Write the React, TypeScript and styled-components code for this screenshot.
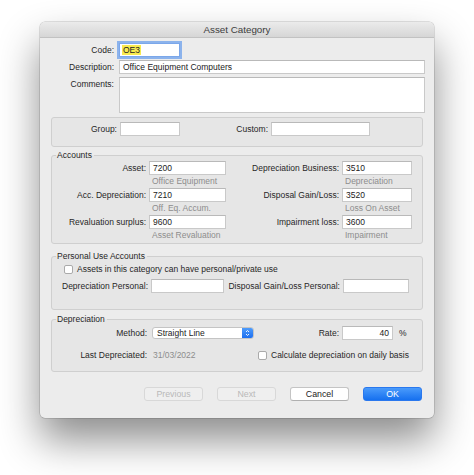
import React from 'react'
import styled, { createGlobalStyle } from 'styled-components'

const GlobalStyle = createGlobalStyle`
  body {
    margin: 0;
    background: #ffffff;
    font-family: "Liberation Sans", Arial, sans-serif;
    color: #262626;
  }
`

const Page = styled.div`
  height: 475px;
  padding: 22px 0 0 40px;
  box-sizing: border-box;
  overflow: hidden;
`

const Window = styled.div`
  width: 394px;
  height: 396px;
  border-radius: 5px;
  background: #ececec;
  box-shadow: 0 22px 40px rgba(0, 0, 0, 0.45), 0 0 0 0.5px rgba(0, 0, 0, 0.22);
  overflow: hidden;
  display: flex;
  flex-direction: column;
`

const TitleBar = styled.div`
  height: 15px;
  border-bottom: 1px solid #c2c2c2;
  background: linear-gradient(#ebebeb, #d6d6d6);
  display: flex;
  align-items: center;
  justify-content: center;
  font-size: 9.8px;
  color: #3c3c3c;
`

const Body = styled.div`
  padding: 5px 9px 0 11px;
  display: flex;
  flex-direction: column;
  font-size: 8.5px;
`

const TopForm = styled.div`
  display: grid;
  grid-template-columns: 63px 1fr;
  column-gap: 5px;
  row-gap: 3px;
`

const Label = styled.div<{ $w?: number; $align?: string }>`
  ${p => (p.$w ? `width: ${p.$w}px; flex: none;` : '')}
  text-align: ${p => p.$align || 'right'};
  line-height: 14px;
  white-space: nowrap;
  color: #262626;
`

const Input = styled.div<{ $w?: number; $h?: number; $right?: boolean; $focus?: boolean }>`
  ${p => (p.$w ? `width: ${p.$w}px; flex: none;` : '')}
  height: ${p => p.$h || 14}px;
  box-sizing: border-box;
  background: #ffffff;
  border: 1px solid ${p => (p.$focus ? '#7ba7ea' : '#c9c9c9')};
  border-top-color: ${p => (p.$focus ? '#7ba7ea' : '#b9b9b9')};
  box-shadow: ${p => (p.$focus ? '0 0 0 2px rgba(108, 160, 236, 0.75)' : 'none')};
  padding: 0 3px;
  line-height: 12px;
  text-align: ${p => (p.$right ? 'right' : 'left')};
  color: #222;
  white-space: nowrap;
  overflow: hidden;
`

const Highlight = styled.span`
  background: #f8ea4f;
  padding: 0 1px;
  margin-left: -1px;
`

const Box = styled.div`
  margin: 4px 2px 0 0;
  height: 30px;
  box-sizing: border-box;
  border: 1px solid #cfcfcf;
  border-radius: 3px;
  background: rgba(0, 0, 0, 0.022);
  padding-top: 4px;
`

const Group = styled.fieldset<{ $mt: number; $pb: number }>`
  margin: ${p => p.$mt}px 2px 0 0;
  padding: 0 0 ${p => p.$pb}px 0;
  border: 1px solid #cfcfcf;
  border-radius: 3px;
  background: rgba(0, 0, 0, 0.022);
  min-width: 0;
`

const Legend = styled.legend`
  margin-left: 4px;
  padding: 0 2px 0 1px;
  font-size: 8.5px;
  line-height: 12px;
  color: #262626;
`

const Row = styled.div<{ $gap?: number; $pl?: number; $mt?: number; $h?: number }>`
  display: flex;
  align-items: center;
  gap: ${p => p.$gap ?? 3}px;
  padding-left: ${p => p.$pl ?? 0}px;
  margin-top: ${p => p.$mt ?? 0}px;
  ${p => (p.$h ? `height: ${p.$h}px;` : '')}
`

const AccountGrid = styled.div`
  display: grid;
  grid-template-columns: 94px 77px 110px 70px;
  grid-auto-rows: 27px;
  column-gap: 3px;
`

const AccountCell = styled.div`
  display: flex;
  flex-direction: column;
`

const SubLabel = styled.div`
  line-height: 13px;
  padding-left: 3px;
  color: #8d8d8d;
  white-space: nowrap;
`

const DateValue = styled.div`
  width: 111px;
  flex: none;
  box-sizing: border-box;
  padding-left: 6px;
  line-height: 14px;
  color: #8d8d8d;
`

const Check = styled.span`
  width: 9px;
  height: 9px;
  flex: none;
  box-sizing: border-box;
  border: 1px solid #aaaaaa;
  border-radius: 2px;
  background: #ffffff;
`

const Spacer = styled.span<{ $w: number }>`
  width: ${p => p.$w}px;
  flex: none;
`

const Select = styled.div`
  width: 102px;
  height: 12px;
  flex: none;
  box-sizing: border-box;
  display: flex;
  border: 1px solid #c4c4c4;
  border-radius: 3px;
  background: #ffffff;
  overflow: hidden;
  line-height: 10px;
`

const SelectText = styled.span`
  flex: 1;
  padding-left: 4px;
  color: #222;
`

const Stepper = styled.span`
  width: 11px;
  background: linear-gradient(#4e9cfb, #1c6ff0);
  display: flex;
  align-items: center;
  justify-content: center;
`

const Buttons = styled.div`
  display: flex;
  justify-content: flex-end;
  gap: 14px;
  margin: 15px 3px 0 0;
`

const Button = styled.div<{ $kind: 'disabled' | 'normal' | 'primary' }>`
  width: 59px;
  height: 14px;
  box-sizing: border-box;
  border-radius: 3px;
  display: flex;
  align-items: center;
  justify-content: center;
  font-size: 8.8px;
  ${p =>
    p.$kind === 'primary'
      ? `background: linear-gradient(#4a9bfb, #1670ef); color: #fff; border: 1px solid #2a78ee;`
      : p.$kind === 'normal'
      ? `background: #ffffff; color: #222; border: 1px solid #c4c4c4; border-bottom-color: #b0b0b0;`
      : `background: #efefef; color: #b9b9b9; border: 1px solid #d8d8d8;`}
`

const StepperIcon = () => (
  <svg width="5" height="8" viewBox="0 0 5 8">
    <path d="M1 3 L2.5 1.5 L4 3 M1 5 L2.5 6.5 L4 5" stroke="#fff" strokeWidth="0.9" fill="none" />
  </svg>
)

const accounts = [
  { label: 'Asset:', code: '7200', name: 'Office Equipment', rLabel: 'Depreciation Business:', rCode: '3510', rName: 'Depreciation' },
  { label: 'Acc. Depreciation:', code: '7210', name: 'Off. Eq. Accum.', rLabel: 'Disposal Gain/Loss:', rCode: '3520', rName: 'Loss On Asset' },
  { label: 'Revaluation surplus:', code: '9600', name: 'Asset Revaluation', rLabel: 'Impairment loss:', rCode: '3600', rName: 'Impairment' },
]

export default function App() {
  return (
    <Page>
      <GlobalStyle />
      <Window>
        <TitleBar>Asset Category</TitleBar>
        <Body>
          <TopForm>
            <Label>Code:</Label>
            <Input $w={61} $focus>
              <Highlight>OE3</Highlight>
            </Input>
            <Label>Description:</Label>
            <Input>Office Equipment Computers</Input>
            <Label>Comments:</Label>
            <Input $h={36} />
          </TopForm>

          <Box>
            <Row>
              <Label $w={65}>Group:</Label>
              <Input $w={60} />
              <Label $w={85}>Custom:</Label>
              <Input $w={99} />
            </Row>
          </Box>

          <Group $mt={2} $pb={1}>
            <Legend>Accounts</Legend>
            <AccountGrid>
              {accounts.map(a => (
                <React.Fragment key={a.code}>
                  <Label>{a.label}</Label>
                  <AccountCell>
                    <Input>{a.code}</Input>
                    <SubLabel>{a.name}</SubLabel>
                  </AccountCell>
                  <Label>{a.rLabel}</Label>
                  <AccountCell>
                    <Input>{a.rCode}</Input>
                    <SubLabel>{a.rName}</SubLabel>
                  </AccountCell>
                </React.Fragment>
              ))}
            </AccountGrid>
          </Group>

          <Group $mt={6} $pb={16}>
            <Legend>Personal Use Accounts</Legend>
            <Row $pl={12} $gap={4} $h={14}>
              <Check />
              <Label $align="left">Assets in this category can have personal/private use</Label>
            </Row>
            <Row $mt={3}>
              <Label $w={96}>Depreciation Personal:</Label>
              <Input $w={73} />
              <Label $w={113}>Disposal Gain/Loss Personal:</Label>
              <Input $w={66} />
            </Row>
          </Group>

          <Group $mt={3} $pb={9}>
            <Legend>Depreciation</Legend>
            <Row $h={16} $gap={0}>
              <Label $w={95}>Method:</Label>
              <Spacer $w={5} />
              <Select>
                <SelectText>Straight Line</SelectText>
                <Stepper>
                  <StepperIcon />
                </Stepper>
              </Select>
              <Label $w={85}>Rate:</Label>
              <Spacer $w={3} />
              <Input $w={51} $right>40</Input>
              <Spacer $w={6} />
              <Label $align="left">%</Label>
            </Row>
            <Row $h={14} $gap={0} $mt={7}>
              <Label $w={95}>Last Depreciated:</Label>
              <DateValue>31/03/2022</DateValue>
              <Check />
              <Spacer $w={4} />
              <Label $align="left">Calculate depreciation on daily basis</Label>
            </Row>
          </Group>

          <Buttons>
            <Button $kind="disabled">Previous</Button>
            <Button $kind="disabled">Next</Button>
            <Button $kind="normal">Cancel</Button>
            <Button $kind="primary">OK</Button>
          </Buttons>
        </Body>
      </Window>
    </Page>
  )
}
